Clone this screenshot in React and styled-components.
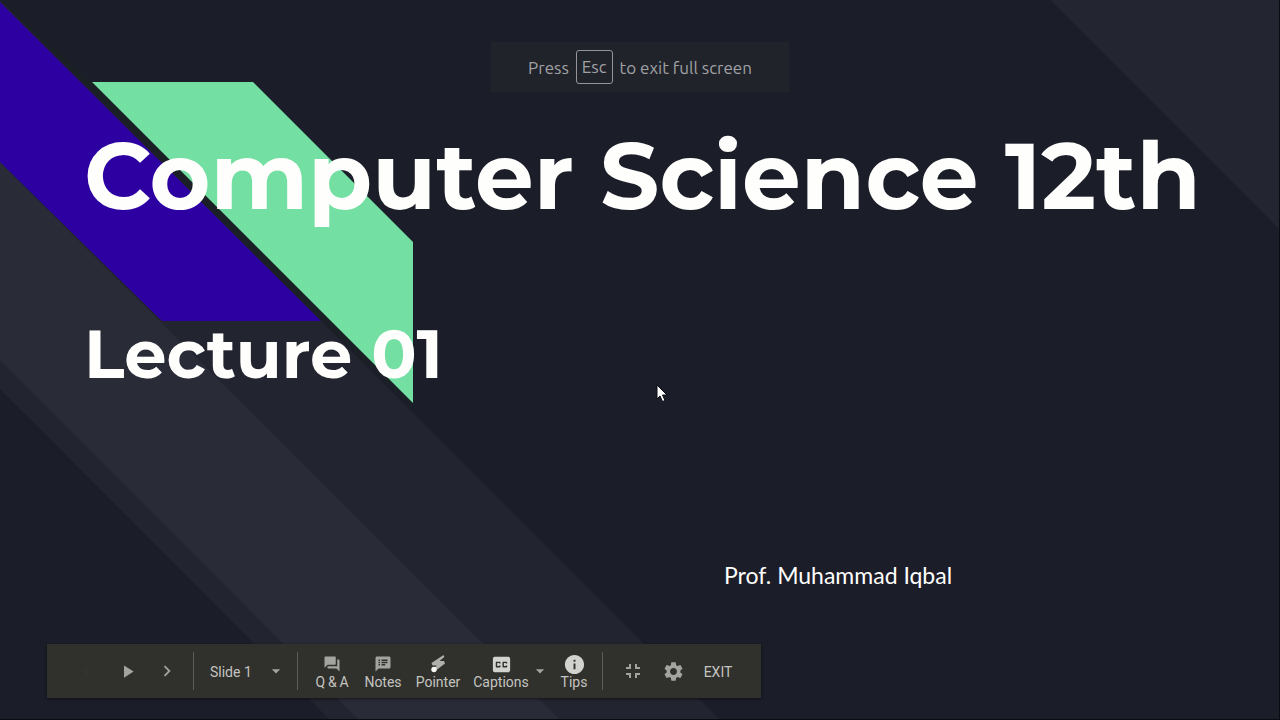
import React, { useState } from 'react';
import styled, { createGlobalStyle } from 'styled-components';
import {
  MdPlayArrow,
  MdChevronLeft,
  MdChevronRight,
  MdArrowDropDown,
  MdForum,
  MdSpeakerNotes,
  MdClosedCaption,
  MdInfo,
  MdSettings,
  MdFullscreenExit,
} from 'react-icons/md';

const GlobalStyle = createGlobalStyle`
  * {
    box-sizing: border-box;
  }

  body {
    margin: 0;
    background: #1b1d29;
  }
`;

const Slide = styled.main`
  position: relative;
  display: flex;
  flex-direction: column;
  min-height: 100vh;
  padding: 120px 84px 128px;
  overflow: hidden;
  color: #fefefc;
`;

const Backdrop = styled.svg`
  position: absolute;
  inset: 0;
  width: 100%;
  height: 100%;
`;

const SlideBody = styled.div`
  position: relative;
  flex: 1;
  display: flex;
  flex-direction: column;
`;

const Title = styled.h1`
  margin: 0;
  font-family: Montserrat, Inter, sans-serif;
  font-size: 93px;
  font-weight: 700;
  line-height: 112px;
  white-space: nowrap;
`;

const Subtitle = styled.h2`
  margin: 80px 0 0;
  font-family: Montserrat, Inter, sans-serif;
  font-size: 67px;
  font-weight: 700;
  line-height: 84px;
  white-space: nowrap;
`;

const Author = styled.p`
  align-self: flex-end;
  width: 472px;
  margin: auto 0 0;
  font-family: Lato, sans-serif;
  font-size: 23px;
  line-height: 34px;
`;

const Toast = styled.div`
  position: absolute;
  top: 42px;
  left: 50%;
  transform: translateX(-50%);
  display: flex;
  align-items: center;
  justify-content: center;
  gap: 7px;
  width: 298px;
  height: 50px;
  background: #20232a;
  color: #a0a1a5;
  font-family: Ubuntu, 'Noto Sans', sans-serif;
  font-size: 17px;
  white-space: nowrap;
`;

const Key = styled.kbd`
  padding: 0 5px;
  border: 1px solid #94959b;
  border-radius: 3px;
  font: inherit;
  line-height: 32px;
`;

const Cursor = styled.svg`
  position: absolute;
  top: 384px;
  left: 656px;
  width: 12px;
  height: 20px;
`;

const Toolbar = styled.div`
  position: absolute;
  bottom: 22px;
  left: 47px;
  display: flex;
  align-items: center;
  height: 54px;
  padding: 0 8px 0 20px;
  background: #30302c;
  box-shadow: 0 1px 3px rgba(0, 0, 0, 0.5);
  color: #c4c4c0;
  font-family: Roboto, sans-serif;
  font-size: 14px;

  svg {
    flex-shrink: 0;
  }
`;

const ToolGroup = styled.div`
  display: flex;
  align-items: center;
  padding: ${(props) => props.$padding || '0'};
`;

const ToolButton = styled.button`
  display: flex;
  align-items: center;
  justify-content: center;
  width: ${(props) => props.$width || 40}px;
  height: 54px;
  padding: 0;
  border: 0;
  background: none;
  color: ${(props) => (props.$faint ? '#343430' : '#a3a39f')};
  font: inherit;
`;

const TextButton = styled(ToolButton)`
  padding-top: 2px;
  color: #c4c4c0;
`;

const LabelButton = styled(ToolButton)`
  flex-direction: column;
  padding-top: 2px;
  color: #c4c4c0;
  line-height: 16px;
  white-space: nowrap;
`;

const IconSlot = styled.span`
  display: flex;
  align-items: center;
  justify-content: center;
  height: 20px;
  color: ${(props) => (props.$bright ? '#d2d2ce' : '#a3a39f')};
`;

const Divider = styled.span`
  width: 1px;
  height: 38px;
  background: #5c5c58;
`;

const SlidePicker = styled.label`
  display: flex;
  align-items: center;
  justify-content: space-between;
  width: 103px;
  padding: 0 11px 0 16px;
  color: #a3a39f;
`;

const SlideSelect = styled.select`
  appearance: none;
  padding: 2px 0 0;
  border: 0;
  background: none;
  color: #c4c4c0;
  font: inherit;
`;

function PointerIcon() {
  return (
    <svg width="18" height="18" viewBox="0 0 18 18" aria-hidden="true">
      <path d="M14.500 0 2.500 8 3.500 10.500H8L3 14.500l2.200 2.200L16 8.400 15 6H10.500L15.300 2z" fill="#b0b0ac" />
      <circle cx="5" cy="14.500" r="2.700" fill="#f6f6f2" />
    </svg>
  );
}

function SlideBackdrop() {
  return (
    <Backdrop viewBox="0 0 1280 720" preserveAspectRatio="none" aria-hidden="true">
      <rect width="1280" height="720" fill="#1b1d29" />
      <path d="M0 0 720 720H330L0 389z" fill="#22242f" />
      <path d="M0 162 560 720H359L0 360z" fill="#292b37" />
      <path d="M1050 0H1280V230z" fill="#232530" />
      <path d="M0 0 92 82 413 402 411 408 321 320z" fill="#1b2026" />
      <path d="M0 2 321 321H162L0 162z" fill="#2d00a2" />
      <path d="M92 82H253L413 242V403z" fill="#74dfa2" />
      <path d="M1279 0h1v720H0v-1h1279z" fill="#0b0b12" />
    </Backdrop>
  );
}

function App() {
  const [slide, setSlide] = useState('1');

  return (
    <>
      <GlobalStyle />
      <Slide>
        <SlideBackdrop />
        <SlideBody>
          <Title>Computer Science 12th</Title>
          <Subtitle>Lecture 01</Subtitle>
          <Author>Prof. Muhammad Iqbal</Author>
        </SlideBody>

        <Toast role="status">
          <span>Press</span>
          <Key>Esc</Key>
          <span>to exit full screen</span>
        </Toast>

        <Cursor viewBox="0 0 12 20" aria-hidden="true">
          <path
            d="M1 1v14l3-3 2.500 5.500 2.500-1-2.500-5.500H11z"
            fill="#fff"
            stroke="#0c0c14"
            strokeWidth="1"
          />
        </Cursor>

        <Toolbar role="toolbar" aria-label="Presentation">
          <ToolGroup $padding="0 6px 0 0">
            <ToolButton $faint disabled aria-label="Previous">
              <MdChevronLeft size={22} />
            </ToolButton>
            <ToolButton aria-label="Play">
              <MdPlayArrow size={21} />
            </ToolButton>
            <ToolButton aria-label="Next">
              <MdChevronRight size={22} />
            </ToolButton>
          </ToolGroup>
          <Divider />
          <SlidePicker>
            <SlideSelect
              aria-label="Slide"
              value={slide}
              onChange={(event) => setSlide(event.target.value)}
            >
              <option value="1">Slide 1</option>
            </SlideSelect>
            <MdArrowDropDown size={20} />
          </SlidePicker>
          <Divider />
          <ToolGroup $padding="0 0 0 8px">
            <LabelButton $width={52}>
              <IconSlot><MdForum size={18} /></IconSlot>
              Q&#8201;&amp;&#8201;A
            </LabelButton>
            <LabelButton $width={50}>
              <IconSlot><MdSpeakerNotes size={18} /></IconSlot>
              Notes
            </LabelButton>
            <LabelButton $width={60}>
              <IconSlot><PointerIcon /></IconSlot>
              Pointer
            </LabelButton>
            <LabelButton $width={66}>
              <IconSlot $bright><MdClosedCaption size={23} /></IconSlot>
              Captions
            </LabelButton>
            <ToolButton $width={12} aria-label="Caption settings">
              <MdArrowDropDown size={20} />
            </ToolButton>
            <LabelButton $width={56}>
              <IconSlot $bright><MdInfo size={23} /></IconSlot>
              Tips
            </LabelButton>
          </ToolGroup>
          <Divider />
          <ToolButton $width={60} aria-label="Exit full screen">
            <MdFullscreenExit size={24} />
          </ToolButton>
          <ToolButton $width={20} aria-label="Settings">
            <MdSettings size={23} />
          </ToolButton>
          <TextButton $width={70}>EXIT</TextButton>
        </Toolbar>
      </Slide>
    </>
  );
}

export default App;
